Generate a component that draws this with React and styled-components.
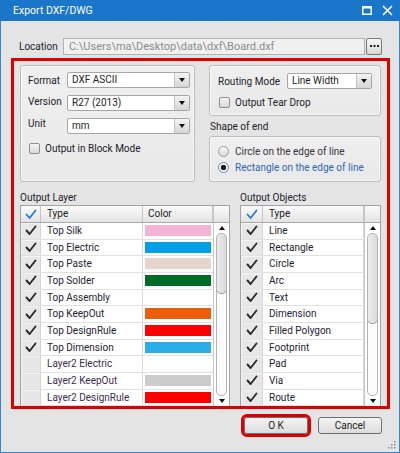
import React from 'react'
import styled, {createGlobalStyle} from 'styled-components'

const GlobalStyle = createGlobalStyle`
  * { box-sizing: border-box; }
  body {
    margin: 0;
    background: #e4e4e4;
    font-family: Roboto, "Noto Sans", sans-serif;
    font-size: 10px;
    color: #231c2c;
  }
`

const layers = [
    {name: 'Top Silk', checked: true, color: '#f5b4d6'},
    {name: 'Top Electric', checked: true, color: '#00a0e9'},
    {name: 'Top Paste', checked: true, color: '#e5d5cd'},
    {name: 'Top Solder', checked: true, color: '#006b23'},
    {name: 'Top Assembly', checked: true, color: null},
    {name: 'Top KeepOut', checked: true, color: '#eb5c0b'},
    {name: 'Top DesignRule', checked: true, color: '#ff0000'},
    {name: 'Top Dimension', checked: true, color: '#2aaeea'},
    {name: 'Layer2 Electric', checked: false, color: null},
    {name: 'Layer2 KeepOut', checked: false, color: '#cccccc'},
    {name: 'Layer2 DesignRule', checked: false, color: '#ff0000'},
]

const objects = ['Line', 'Rectangle', 'Circle', 'Arc', 'Text', 'Dimension', 'Filled Polygon', 'Footprint', 'Pad', 'Via', 'Route']

function Tick({blue}) {
    return (
        <svg width="12" height="11" viewBox="0 0 12 11">
            <path d="M1.5 5.5 L4.6 9 L10.5 1.5" fill="none" stroke={blue ? '#1f78e0' : '#2b2b2b'}
                  strokeWidth={blue ? 1.7 : 1.9} strokeLinecap="round" strokeLinejoin="round"/>
        </svg>
    )
}

function Combo({value, width}) {
    return (
        <ComboBox $width={width}>
            <ComboText>{value}</ComboText>
            <ComboArrow><Triangle/></ComboArrow>
        </ComboBox>
    )
}

function ScrollBar({thumb}) {
    return (
        <ScrollCol>
            <HeadCell/>
            <ArrowBox><SmallArrow $up/></ArrowBox>
            <Track>
                <Thumb style={{height: thumb}}/>
            </Track>
            <ArrowBox><SmallArrow/></ArrowBox>
        </ScrollCol>
    )
}

export default function App() {
    return (
        <Window>
            <GlobalStyle/>
            <TitleBar>
                <span>Export DXF/DWG</span>
                <TitleIcons>
                    <svg width="10" height="9" viewBox="0 0 10 9">
                        <rect x="0.75" y="1" width="8.5" height="7.25" fill="none" stroke="#fff" strokeWidth="1.5"/>
                        <rect x="0" y="0" width="10" height="2.5" fill="#fff"/>
                    </svg>
                    <svg width="11" height="11" viewBox="0 0 11 11">
                        <path d="M1 1 L10 10 M10 1 L1 10" stroke="#fff" strokeWidth="1.6"/>
                    </svg>
                </TitleIcons>
            </TitleBar>
            <Body>
                <LocationRow>
                    <LocationLabel>Location</LocationLabel>
                    <PathInput>C:\Users\ma\Desktop\data\dxf\Board.dxf</PathInput>
                    <BrowseButton>
                        <svg width="9" height="3" viewBox="0 0 9 3" fill="#222">
                            <rect x="0" y="0" width="2" height="2"/>
                            <rect x="3.5" y="0" width="2" height="2"/>
                            <rect x="7" y="0" width="2" height="2"/>
                        </svg>
                    </BrowseButton>
                </LocationRow>

                <RedFrame>
                    <TopRow>
                        <LeftGroup>
                            <FieldRow>
                                <FieldLabel>Format</FieldLabel>
                                <Combo value="DXF ASCII"/>
                            </FieldRow>
                            <FieldRow>
                                <FieldLabel $shift={-2}>Version</FieldLabel>
                                <Combo value="R27 (2013)"/>
                            </FieldRow>
                            <FieldRow>
                                <FieldLabel $shift={-3}>Unit</FieldLabel>
                                <Combo value="mm"/>
                            </FieldRow>
                            <CheckRow $top={5}>
                                <CheckBox/>
                                <span>Output in Block Mode</span>
                            </CheckRow>
                        </LeftGroup>

                        <RightCol>
                            <RoutingGroup>
                                <FieldRow>
                                    <FieldLabel $width={69}>Routing Mode</FieldLabel>
                                    <Combo value="Line Width" width={85}/>
                                </FieldRow>
                                <CheckRow $top={-1}>
                                    <CheckBox/>
                                    <span>Output Tear Drop</span>
                                </CheckRow>
                            </RoutingGroup>
                            <SectionLabel>Shape of end</SectionLabel>
                            <ShapeGroup>
                                <RadioRow>
                                    <Radio/>
                                    <span>Circle on the edge of line</span>
                                </RadioRow>
                                <RadioRow $active>
                                    <Radio $checked/>
                                    <span>Rectangle on the edge of line</span>
                                </RadioRow>
                            </ShapeGroup>
                        </RightCol>
                    </TopRow>

                    <BottomRow>
                        <Panel $width={210}>
                            <PanelLabel>Output Layer</PanelLabel>
                            <Table>
                                <Columns>
                                    <HeaderRow $cols="20px 102px 1fr">
                                        <HeadCheck><Tick blue/></HeadCheck>
                                        <HeadText>Type</HeadText>
                                        <HeadText $pad={5}>Color</HeadText>
                                    </HeaderRow>
                                    {layers.map(l => (
                                        <Row key={l.name} $cols="20px 102px 1fr">
                                            <CheckCell>{l.checked && <Tick/>}</CheckCell>
                                            <TypeCell $dim={!l.checked}>{l.name}</TypeCell>
                                            <ColorCell>
                                                {l.color && <Swatch style={{background: l.color}}/>}
                                            </ColorCell>
                                        </Row>
                                    ))}
                                </Columns>
                                <ScrollBar thumb={61}/>
                            </Table>
                        </Panel>

                        <Panel $width={141}>
                            <PanelLabel>Output Objects</PanelLabel>
                            <Table>
                                <Columns>
                                    <HeaderRow $cols="22px 1fr">
                                        <HeadCheck><Tick blue/></HeadCheck>
                                        <HeadText>Type</HeadText>
                                    </HeaderRow>
                                    {objects.map(o => (
                                        <Row key={o} $cols="22px 1fr">
                                            <CheckCell><Tick/></CheckCell>
                                            <TypeCell>{o}</TypeCell>
                                        </Row>
                                    ))}
                                </Columns>
                                <ScrollBar thumb={91}/>
                            </Table>
                        </Panel>
                    </BottomRow>
                </RedFrame>

                <ButtonRow>
                    <Button $marked>O K</Button>
                    <Button>Cancel</Button>
                </ButtonRow>
                <Grip>
                    <svg width="9" height="9" viewBox="0 0 9 9" fill="#8a8a8a">
                        <rect x="7" y="1" width="1.5" height="1.5"/>
                        <rect x="4" y="4" width="1.5" height="1.5"/>
                        <rect x="7" y="4" width="1.5" height="1.5"/>
                        <rect x="1" y="7" width="1.5" height="1.5"/>
                        <rect x="4" y="7" width="1.5" height="1.5"/>
                        <rect x="7" y="7" width="1.5" height="1.5"/>
                    </svg>
                </Grip>
            </Body>
        </Window>
    )
}

const Window = styled.div`
  position: relative;
  width: 400px;
  height: 453px;
  display: flex;
  flex-direction: column;
  border: 1px solid #3584d2;
  border-top: none;
  background: #e4e4e4;
`

const TitleBar = styled.div`
  height: 21px;
  margin: 0 -1px;
  background: #1a76c9;
  color: #fff;
  font-size: 10.5px;
  display: flex;
  align-items: center;
  justify-content: space-between;
  padding: 0 7px 1px 13px;
`

const TitleIcons = styled.div`
  display: flex;
  align-items: center;
  gap: 10px;
`

const Body = styled.div`
  flex: 1;
  display: flex;
  flex-direction: column;
  padding: 17px 9px 0 10px;
`

const LocationRow = styled.div`
  display: flex;
  align-items: center;
  height: 17px;
  padding: 0 8px;
  margin-bottom: 3px;
`

const LocationLabel = styled.div`
  width: 44px;
  flex-shrink: 0;
`

const PathInput = styled.div`
  flex: 1;
  height: 17px;
  line-height: 15px;
  padding-left: 5px;
  border: 1px solid #b3b3b3;
  background: #f0f0f0;
  color: #8c8c8c;
  font-size: 11px;
`

const BrowseButton = styled.div`
  width: 16px;
  height: 17px;
  margin-left: 1px;
  border: 1px solid #7a7a7a;
  border-radius: 2px;
  background: linear-gradient(#f6f6f6, #d8d8d8);
  display: flex;
  align-items: center;
  justify-content: center;
`

const RedFrame = styled.div`
  height: 351px;
  border: 3px solid #e10000;
  padding: 4px 6px 0 6px;
  display: flex;
  flex-direction: column;
  overflow: hidden;
`

const TopRow = styled.div`
  display: flex;
  gap: 14px;
  height: 117px;
`

const GroupBox = styled.div`
  border: 1px solid #bcbcbc;
  border-radius: 3px;
  background: linear-gradient(#efefef, #e9e9e9);
  box-shadow: inset 0 0 0 1px #f8f8f8;
`

const LeftGroup = styled(GroupBox)`
  width: 175px;
  padding: 6px 4px 0 7px;
`

const RightCol = styled.div`
  width: 172px;
  display: flex;
  flex-direction: column;
`

const RoutingGroup = styled(GroupBox)`
  height: 51px;
  padding: 7px 8px 0 8px;
`

const SectionLabel = styled.div`
  height: 20px;
  padding: 3px 0 0 1px;
  line-height: 16px;
`

const ShapeGroup = styled(GroupBox)`
  flex: 1;
  padding: 6px 8px 0 8px;
`

const FieldRow = styled.div`
  display: flex;
  align-items: center;
  height: 16px;
  margin-bottom: 7px;
`

const FieldLabel = styled.div`
  width: ${p => p.$width || 39}px;
  flex-shrink: 0;
  white-space: nowrap;
  margin-top: ${p => (p.$shift || 0) * 2}px;
`

const ComboBox = styled.div`
  ${p => p.$width ? `width: ${p.$width}px;` : 'flex: 1;'}
  height: 16px;
  display: flex;
  border: 1px solid #a6a6a6;
  border-radius: 2px;
  background: #fff;
`

const ComboText = styled.div`
  flex: 1;
  padding-left: 4px;
  line-height: 14px;
  color: #1e1e1e;
`

const ComboArrow = styled.div`
  width: 15px;
  border-left: 1px solid #c2c2c2;
  background: linear-gradient(#f4f4f4, #d6d6d6);
  display: flex;
  align-items: center;
  justify-content: center;
`

const Triangle = styled.div`
  width: 0;
  height: 0;
  border-left: 3.5px solid transparent;
  border-right: 3.5px solid transparent;
  border-top: 4px solid #111;
`

const CheckRow = styled.div`
  display: flex;
  align-items: center;
  height: 14px;
  margin-top: ${p => p.$top}px;
  padding-left: 1px;
`

const CheckBox = styled.div`
  width: 11px;
  height: 11px;
  margin-right: 5px;
  border: 1px solid #8e8e8e;
  border-radius: 2px;
  background: linear-gradient(#f6f6f6, #d9d9d9);
`

const RadioRow = styled.div`
  display: flex;
  align-items: center;
  height: 16px;
  white-space: nowrap;
  color: ${p => p.$active ? '#2f68b5' : '#3a3340'};
`

const Radio = styled.div`
  width: 11px;
  height: 11px;
  flex-shrink: 0;
  margin-right: 6px;
  border-radius: 50%;
  border: 1px solid ${p => p.$checked ? '#6f8fb4' : '#9a9a9a'};
  background: ${p => p.$checked
    ? 'radial-gradient(circle, #1c1c1c 0 2.5px, #f2f2f2 3px)'
    : 'linear-gradient(#f8f8f8, #d8d8d8)'};
`

const BottomRow = styled.div`
  flex: 1;
  display: flex;
  gap: 10px;
  margin-top: 8px;
  min-height: 0;
`

const Panel = styled.div`
  width: ${p => p.$width}px;
  display: flex;
  flex-direction: column;
`

const PanelLabel = styled.div`
  height: 15px;
  line-height: 15px;
`

const Table = styled.div`
  flex: 1;
  display: flex;
  border: 1px solid #a3a3a3;
  border-bottom: none;
  background: #fff;
  overflow: hidden;
`

const Columns = styled.div`
  flex: 1;
  display: flex;
  flex-direction: column;
`

const HeaderRow = styled.div`
  display: grid;
  grid-template-columns: ${p => p.$cols};
  height: 17px;
  flex-shrink: 0;
  border-bottom: 1px solid #a9a9a9;
  background: linear-gradient(#fbfbfb, #e3e3e3);
`

const HeadCheck = styled.div`
  display: flex;
  align-items: center;
  justify-content: center;
  border-right: 1px solid #c6c6c6;
`

const HeadText = styled.div`
  padding-left: ${p => p.$pad || 6}px;
  line-height: 16px;
  border-right: 1px solid #c6c6c6;
  color: #222;
`

const Row = styled.div`
  display: grid;
  grid-template-columns: ${p => p.$cols};
  height: 16.67px;
  flex-shrink: 0;
  border-bottom: 1px solid #e1e1e1;
`

const CheckCell = styled.div`
  display: flex;
  align-items: center;
  justify-content: center;
  background: #e7e7e7;
  border-right: 1px solid #d4d4d4;
  box-shadow: inset 1px 1px 0 #f4f4f4;
`

const TypeCell = styled.div`
  padding-left: 6px;
  line-height: 15px;
  white-space: nowrap;
  border-right: 1px solid #d8d8d8;
  color: ${p => p.$dim ? '#3f2a52' : '#1f2233'};
`

const ColorCell = styled.div`
  padding: 2px 2px 0 2px;
`

const Swatch = styled.div`
  height: 11px;
`

const ScrollCol = styled.div`
  width: 16px;
  flex-shrink: 0;
  display: flex;
  flex-direction: column;
  border-left: 1px solid #c6c6c6;
  background: #fff;
`

const HeadCell = styled.div`
  height: 17px;
  flex-shrink: 0;
  border-bottom: 1px solid #a9a9a9;
  background: linear-gradient(#fbfbfb, #e3e3e3);
`

const ArrowBox = styled.div`
  height: 10px;
  flex-shrink: 0;
  display: flex;
  align-items: center;
  justify-content: center;
`

const SmallArrow = styled.div`
  width: 0;
  height: 0;
  border-left: 3px solid transparent;
  border-right: 3px solid transparent;
  ${p => p.$up ? 'border-bottom: 4px solid #111;' : 'border-top: 4px solid #111;'}
`

const Track = styled.div`
  flex: 1;
  margin: 0 2px;
  border: 1px solid #b5b5b5;
  border-radius: 5px;
  background: #fbfbfb;
  overflow: hidden;
`

const Thumb = styled.div`
  margin: -1px;
  border: 1px solid #9d9d9d;
  border-radius: 5px;
  background: linear-gradient(90deg, #ececec, #dadada);
`

const ButtonRow = styled.div`
  display: flex;
  justify-content: flex-end;
  gap: 10px;
  margin-top: 8px;
  padding-right: 8px;
`

const Button = styled.div`
  width: 64px;
  height: 17px;
  border: 1px solid #6f6f6f;
  border-radius: 3px;
  background: linear-gradient(#f4f4f4, #dcdcdc);
  text-align: center;
  line-height: 15px;
  color: #1e1e1e;
  ${p => p.$marked && 'outline: 3px solid #d80000;'}
`

const Grip = styled.div`
  position: absolute;
  right: 3px;
  bottom: 3px;
  line-height: 0;
`
